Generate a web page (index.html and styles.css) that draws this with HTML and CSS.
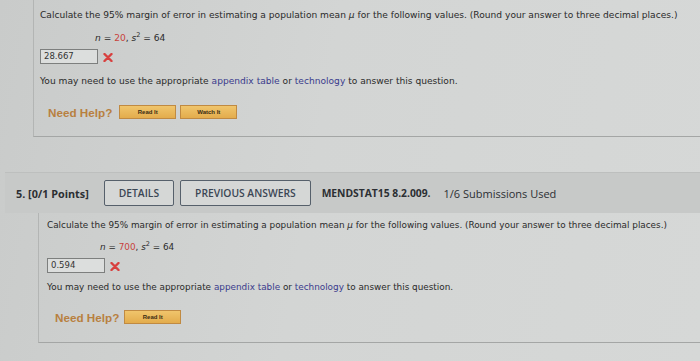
FILE: index.html
```html
<!DOCTYPE html>
<html lang="en">
<head>
  <meta charset="UTF-8">
  <meta name="viewport" content="width=device-width, initial-scale=1.0">
  <title>Question 5</title>
  <link rel="stylesheet" href="styles.css">
</head>
<body>
    <div class="question question-prev">
        <p class="prompt">Calculate the 95% margin of error in estimating a population mean <i>&mu;</i> for the following values. (Round your answer to three decimal places.)</p>
        <p class="values"><i>n</i> = <span class="num">20</span>, <i>s</i><sup>2</sup> = 64</p>
        <div class="answer">
            <span class="answer-box">28.667</span>
            <svg class="wrong" width="10" height="9" viewBox="0 0 10 9"><path d="M1.5 1 L8.5 8 M8.5 1 L1.5 8" stroke="#d8403f" stroke-width="2.4" stroke-linecap="round"/></svg>
        </div>
        <p class="note">You may need to use the appropriate <a href="#">appendix table</a> or <a href="#">technology</a> to answer this question.</p>
        <div class="help">
            <span class="help-label">Need Help?</span>
            <button class="help-btn">Read It</button>
            <button class="help-btn">Watch It</button>
        </div>
    </div>

    <div class="q-header">
        <span class="q-points">5. [0/1 Points]</span>
        <button class="tab-btn">DETAILS</button>
        <button class="tab-btn">PREVIOUS ANSWERS</button>
        <span class="q-code">MENDSTAT15 8.2.009.</span>
        <span class="q-subs">1/6 Submissions Used</span>
    </div>

    <div class="question question-cur">
        <p class="prompt">Calculate the 95% margin of error in estimating a population mean <i>&mu;</i> for the following values. (Round your answer to three decimal places.)</p>
        <p class="values"><i>n</i> = <span class="num">700</span>, <i>s</i><sup>2</sup> = 64</p>
        <div class="answer">
            <span class="answer-box">0.594</span>
            <svg class="wrong" width="10" height="9" viewBox="0 0 10 9"><path d="M1.5 1 L8.5 8 M8.5 1 L1.5 8" stroke="#d8403f" stroke-width="2.4" stroke-linecap="round"/></svg>
        </div>
        <p class="note">You may need to use the appropriate <a href="#">appendix table</a> or <a href="#">technology</a> to answer this question.</p>
        <div class="help">
            <span class="help-label">Need Help?</span>
            <button class="help-btn">Read It</button>
        </div>
    </div>
</body>
</html>
```

FILE: styles.css
```css
body {
    margin: 0;
    height: 361px;
    overflow: hidden;
    background: linear-gradient(100deg, #c9cbca 0%, #d3d5d4 45%, #d6d8d7 100%);
    font-family: "DejaVu Sans", Verdana, sans-serif;
    font-size: 9.1px;
    line-height: 11px;
    color: #2a2a2a;
}

p {
    margin: 0;
}

.question {
    border-left: 1px solid #b3b5b4;
    border-bottom: 1px solid #a4a6a5;
}

.question-prev {
    margin-left: 33px;
    padding: 10px 0 17px 6px;
}

/* el segundo bloque se ve un poco más chico en la foto */
.question-cur {
    margin-left: 38px;
    padding: 7px 0 18px 8px;
    font-size: 8.85px;
}

.values {
    margin-top: 12px;
    padding-left: 55px;
}

.question-cur .values {
    margin-top: 11px;
    padding-left: 53px;
}

.values sup {
    font-size: 6.5px;
    line-height: 0;
}

.num {
    color: #c8423c;
}

.answer {
    display: flex;
    align-items: center;
    gap: 5px;
    margin-top: 5px;
}

.answer-box {
    display: inline-block;
    width: 53px;
    height: 13px;
    line-height: 13px;
    padding-left: 3px;
    border: 1px solid #7d7f7e;
    background: #dcdedd;
    font-size: 8.5px;
    color: #333;
}

.wrong {
    margin-top: 2px;
}

.note {
    margin-top: 12px;
}

.question-cur .note {
    margin-top: 9px;
}

.note a {
    color: #3a3b8c;
    text-decoration: none;
}

.help {
    display: flex;
    align-items: center;
    gap: 4px;
    margin-top: 18px;
    padding-left: 8px;
}

.question-cur .help {
    margin-top: 17px;
    gap: 2px;
}

.help-label {
    font-family: "Liberation Sans", Arial, sans-serif;
    font-weight: bold;
    font-size: 11.7px;
    color: #b8803f;
    margin-right: 3px;
}

.help-btn {
    width: 57px;
    height: 14px;
    padding: 0;
    border: 1px solid #c08a42;
    background: linear-gradient(#f0c56c, #e3ac4c);
    font-family: "Liberation Sans", Arial, sans-serif;
    font-weight: bold;
    font-size: 6px;
    color: #3a2c14;
}

.q-header {
    display: flex;
    align-items: center;
    height: 40px;
    margin-top: 35px;
    margin-left: 5px;
    padding-left: 11px;
    background: #c7c9c8;
    border-top: 1px solid #bdbfbe;
    font-family: "Open Sans", sans-serif;
    font-size: 11px;
    color: #2c2f33;
}

.q-points {
    font-weight: bold;
    font-size: 10.8px;
    margin-right: 15px;
}

.tab-btn {
    height: 26px;
    padding: 0 14px;
    margin-right: 6px;
    border: 1.5px solid #56606b;
    border-radius: 2px;
    background: #d5d7d6;
    font-family: "Open Sans", sans-serif;
    font-weight: 600;
    font-size: 10.3px;
    color: #3b4654;
}

.q-code {
    font-weight: bold;
    font-size: 10.3px;
    margin-left: 5px;
    margin-right: 13px;
}
```
